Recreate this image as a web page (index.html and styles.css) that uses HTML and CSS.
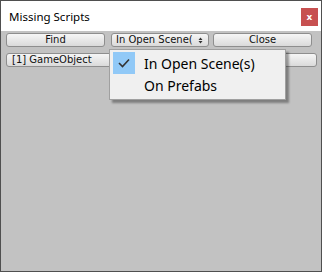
FILE: index.html
```html
<!DOCTYPE html>
<html lang="en">
<head>
    <meta charset="UTF-8">
    <title>Missing Scripts</title>
    <link rel="stylesheet" href="styles.css">
</head>
<body>
    <div class="ventana">
        <div class="titulo">
            <span class="titulo-texto">Missing Scripts</span>
            <span class="cerrar">x</span>
        </div>
        <div class="contenido">
            <div class="fila">
                <button class="boton ancho1">Find</button>
                <button class="boton ancho2 desplegable">In Open Scene(<svg class="flechas" width="5" height="7" viewBox="0 0 5 7"><path d="M0.5 3 L2.5 0.5 L4.5 3 Z M0.5 4 L2.5 6.5 L4.5 4 Z" fill="#333"/></svg></button>
                <button class="boton ancho3">Close</button>
            </div>
            <div class="fila">
                <button class="boton resultado">[1] GameObject</button>
            </div>

            <!-- menu del desplegable, va encima del resto -->
            <div class="menu">
                <div class="opcion">
                    <span class="marca"><svg width="12" height="10" viewBox="0 0 12 10"><path d="M1 5 L4.5 8.5 L11 1.5" fill="none" stroke="#333" stroke-width="1.6"/></svg></span>
                    <span>In Open Scene(s)</span>
                </div>
                <div class="opcion">
                    <span class="marca vacia"></span>
                    <span>On Prefabs</span>
                </div>
            </div>
        </div>
    </div>
</body>
</html>
```

FILE: styles.css
```css
*{
    box-sizing: border-box;
}
body{
    margin: 0;
    font-family: "Noto Sans", sans-serif;
}
.ventana{
    width: 322px;
    height: 272px;
    border: 1px solid #4f4f4f;
    display: flex;
    flex-direction: column;
    background-color: #c2c2c2;
}
.titulo{
    height: 30px;
    background-color: #ffffff;
    display: flex;
    align-items: center;
    justify-content: space-between;
    padding: 0 3px 0 8px;
}
.titulo-texto{
    font-size: 11.5px;
    color: #000;
}
.cerrar{
    width: 17px;
    height: 18px;
    background-color: #c75050;
    color: #fff;
    font-family: "DejaVu Sans", sans-serif;
    font-size: 9px;
    font-weight: bold;
    display: flex;
    align-items: center;
    justify-content: center;
    margin-top: 2px;
}
.contenido{
    flex: 1;
    position: relative;
    padding: 2px 4px 0 5px;
}
.fila{
    display: flex;
    gap: 4px;
    margin-bottom: 6px;
}
.boton{
    height: 14px;
    padding: 0;
    border: 1px solid #8e8e8e;
    border-radius: 3px;
    background: linear-gradient(#f6f6f6, #dadada);
    font-family: "DejaVu Sans", sans-serif;
    font-size: 10px;
    line-height: 12px;
    color: #111;
}
.ancho1{
    width: 99px;
}
.ancho2{
    width: 98px;
    margin-left: 2px;
    text-align: left;
    padding-left: 4px;
    position: relative;
}
.ancho3{
    width: 99px;
}
.flechas{
    position: absolute;
    right: 5px;
    top: 3px;
}
.resultado{
    width: 311px;
    text-align: left;
    padding-left: 5px;
}
.menu{
    position: absolute;
    left: 108px;
    top: 18px;
    width: 177px;
    height: 51px;
    background-color: #f0f0f0;
    border: 1px solid #a0a0a0;
    box-shadow: 3px 3px 2px rgba(0, 0, 0, 0.35);
    padding: 2px 3px;
    font-size: 14px;
    color: #000;
}
.opcion{
    display: flex;
    align-items: center;
    height: 22px;
}
.marca{
    width: 22px;
    height: 22px;
    background-color: #91c9f7;
    margin-right: 9px;
    display: flex;
    align-items: center;
    justify-content: center;
}
.vacia{
    background-color: transparent;
}
```
